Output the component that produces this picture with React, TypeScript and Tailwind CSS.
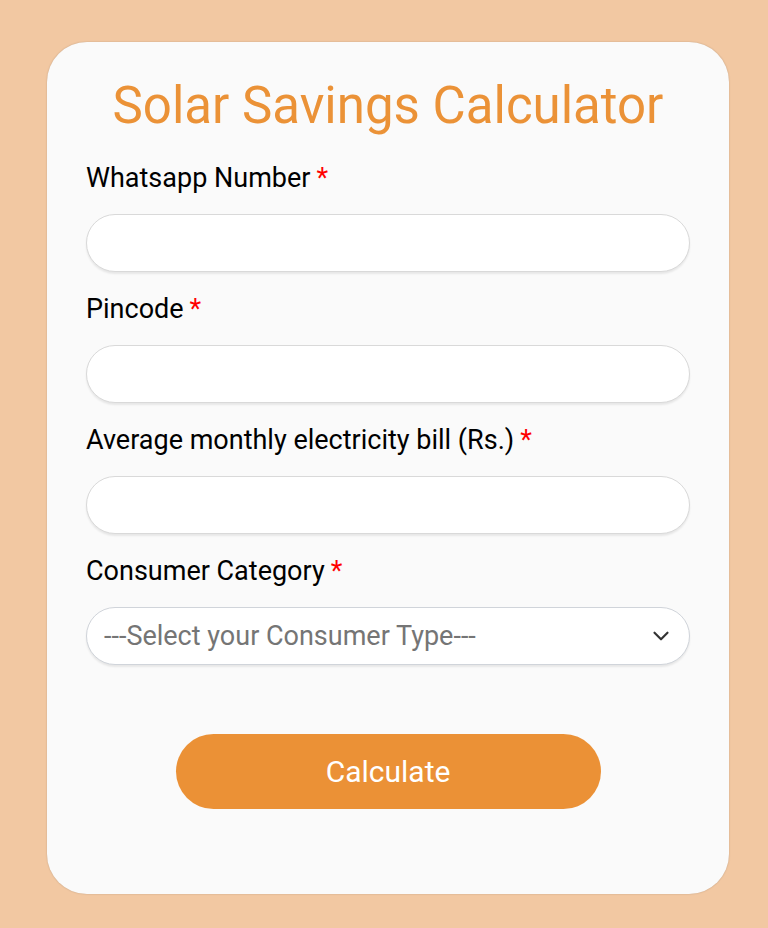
import { ChevronDown } from 'lucide-react';

const fields = ['Whatsapp Number', 'Pincode', 'Average monthly electricity bill (Rs.)'];

function Label({ text }: { text: string }) {
  return (
    <label className="block text-[27px] leading-[30px] text-black">
      {text}
      <span className="ml-[6px] text-[#ff0000]">*</span>
    </label>
  );
}

export default function App() {
  return (
    <div
      className="min-h-[928px] bg-[#f2c8a2] pt-[42px] pl-[47px] pr-[39px] pb-[34px]"
      style={{ fontFamily: 'Roboto, "Noto Sans", sans-serif' }}
    >
      <div className="h-[852px] rounded-[40px] bg-[#fafafa] px-[39px] pt-[34px] shadow-[0_0_2px_rgba(0,0,0,0.2)]">
        <h1 className="text-center text-[51px] leading-[60px] text-[#eb9237]">Solar Savings Calculator</h1>
        <div className="mt-[27px] flex flex-col gap-[22px]">
          {fields.map((f) => (
            <div key={f} className="flex flex-col gap-[21px]">
              <Label text={f} />
              <input className="h-[58px] w-full rounded-full border border-[#d9d9d9] bg-white px-5 text-[24px] outline-none shadow-[0_2px_2px_rgba(0,0,0,0.08)]" />
            </div>
          ))}
          <div className="flex flex-col gap-[21px]">
            <Label text="Consumer Category" />
            <div className="flex h-[58px] w-full items-center justify-between rounded-full border border-[#d0d4da] bg-white pl-[17px] pr-[15px] shadow-[0_2px_2px_rgba(0,0,0,0.08)]">
              <span className="text-[27px] text-[#757575]">---Select your Consumer Type---</span>
              <ChevronDown className="h-[26px] w-[26px] text-[#333]" strokeWidth={2} />
            </div>
          </div>
        </div>
        <div className="mt-[69px] flex justify-center">
          <button className="h-[75px] w-[425px] rounded-full bg-[#eb9136] text-[30px] text-white">Calculate</button>
        </div>
      </div>
    </div>
  );
}
